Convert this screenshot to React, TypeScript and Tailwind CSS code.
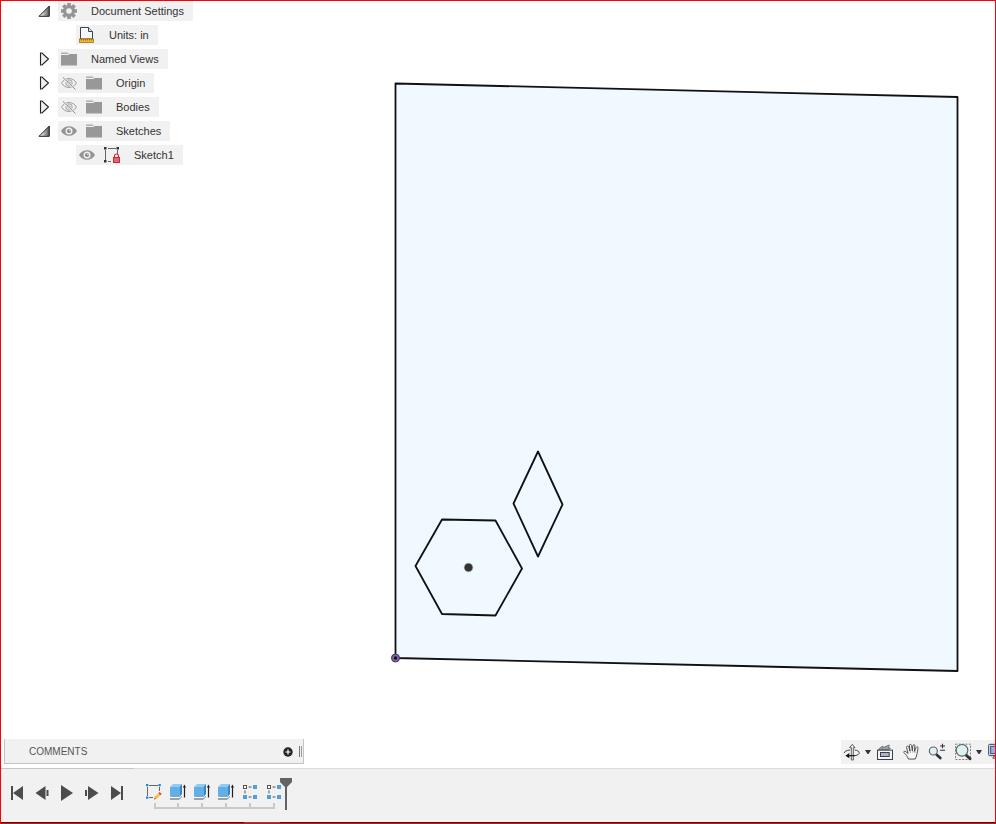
import type { ReactNode } from "react";

type IconProps = { className?: string };

const Gear = () => (
  <svg viewBox="0 0 16 16" className="size-4">
    <g fill="#959595">
      {[0, 45, 90, 135].map((a) => (
        <rect key={a} x="6.2" y="0" width="3.6" height="16" transform={`rotate(${a} 8 8)`} />
      ))}
      <circle cx="8" cy="8" r="6" />
    </g>
    <circle cx="8" cy="8" r="2.8" fill="#f1f1f1" />
  </svg>
);

const Units = () => (
  <svg viewBox="0 0 16 16" className="size-4">
    <path d="M1.500 12V.5H9.500l4 4V12z" fill="#f6f8fb" stroke="#3c4252" />
    <path d="M9.500 .5v4h4" fill="#cfd4de" stroke="#3c4252" />
    <rect x=".5" y="12" width="14" height="3.500" fill="#f3bb2c" stroke="#a6700e" strokeWidth=".8" />
    <path d="M2.500 12v1.500M4.500 12v1.500M6.500 12v1.500M8.500 12v1.500M10.500 12v1.500M12.500 12v1.500" stroke="#8a5b0a" strokeWidth=".8" />
  </svg>
);

const Folder = () => (
  <svg viewBox="0 0 16 16" className="size-4" fill="#989898">
    <path d="M0 1.500h6.500l1.500 1.500h-8z" opacity=".75" />
    <path d="M0 4h7.500l1-1H16V14.500H0z" />
  </svg>
);

const EyeOn = () => (
  <svg viewBox="0 0 16 16" className="size-4">
    <path d="M0 8C3 1.700 13 1.700 16 8 13 14.300 3 14.300 0 8z" fill="#959595" />
    <circle cx="8" cy="8" r="3.500" fill="#f1f1f1" />
    <circle cx="8" cy="8" r="2.100" fill="#8a8a8a" />
    <circle cx="8.800" cy="7.300" r=".8" fill="#f1f1f1" />
  </svg>
);

const EyeOff = () => (
  <svg viewBox="0 0 16 16" className="size-4" fill="none" stroke="#a0a0a0">
    <path d="M.5 8C4 2 12 2 15.500 8 12 14 4 14 .5 8z" />
    <circle cx="8" cy="8" r="3.200" />
    <circle cx="8" cy="8" r="1.300" />
    <path d="M2 2.500l12 12" stroke="#f1f1f1" strokeWidth="2" />
    <path d="M2 2.500l12.500 12" stroke="#8c8c8c" />
  </svg>
);

const LockedSketch = () => (
  <svg viewBox="0 0 16 16" className="size-4 overflow-visible">
    <path d="M1.500 3v10M13.500 3v4M4 1.500h8M4 14.500h3" stroke="#666" fill="none" />
    <path d="M0 0h2.500v2.500H0zM12.500 0H15v2.500h-2.500zM0 13h2.500v2.500H0z" fill="#333" />
    <path d="M10.500 10.500V9a2 2 0 0 1 4 0v1.500" fill="none" stroke="#c42a34" strokeWidth="1.200" />
    <rect x="9.500" y="10.500" width="6" height="5" fill="#e2676c" stroke="#c42a34" />
  </svg>
);

const Twisty = ({ open }: { open: boolean }) =>
  open ? (
    <svg viewBox="0 0 12 12" className="size-3">
      <defs>
        <linearGradient id="twisty" x1="0" x2="1">
          <stop offset=".2" stopColor="#eee" />
          <stop offset="1" stopColor="#555" />
        </linearGradient>
      </defs>
      <path d="M1 11.300L11.300 1v10.300z" fill="url(#twisty)" stroke="#222" />
    </svg>
  ) : (
    <svg viewBox="0 0 12 12" className="h-3 w-3 overflow-visible">
      <path d="M2.500 0H4l6.500 6L4 12H2.500z" fill="#eceef0" stroke="#222" strokeWidth="1.100" />
    </svg>
  );

type Node = { label: string; icons: ReactNode[]; open?: boolean; child?: boolean };

const nodes: Node[] = [
  { label: "Document Settings", icons: [<Gear key="g" />], open: true },
  { label: "Units: in", icons: [<Units key="u" />], child: true },
  { label: "Named Views", icons: [<Folder key="f" />], open: false },
  { label: "Origin", icons: [<EyeOff key="e" />, <Folder key="f" />], open: false },
  { label: "Bodies", icons: [<EyeOff key="e" />, <Folder key="f" />], open: false },
  { label: "Sketches", icons: [<EyeOn key="e" />, <Folder key="f" />], open: true },
  { label: "Sketch1", icons: [<EyeOn key="e" />, <LockedSketch key="s" />], child: true },
];

const Tree = () => (
  <ul className="flex flex-col gap-1 pl-[37px]">
    {nodes.map((n) => (
      <li key={n.label} className="flex h-5 items-center">
        {n.child ? (
          <span className="w-[38px]" />
        ) : (
          <button aria-label={`Toggle ${n.label}`} aria-expanded={n.open} className="w-5">
            <Twisty open={!!n.open} />
          </button>
        )}
        <button className="flex h-5 items-center bg-[#f1f1f1] pr-[9px] pl-[3px] text-[11px] leading-4 text-[#333]">
          <span className="flex gap-[9px]">{n.icons}</span>
          <span className="ml-3.5">{n.label}</span>
        </button>
      </li>
    ))}
  </ul>
);

const Comments = () => (
  <div className="mb-1 ml-[3px] flex h-[25px] items-center border-r border-b border-l border-[#c4c4c4] bg-[#f1f1f1] pt-px pr-px pl-6">
    <span className="flex-1 text-[10px] leading-4 text-[#555]">COMMENTS</span>
    <button aria-label="Add comment" className="mr-1.5">
      <svg viewBox="0 0 10 10" className="size-2.5">
        <circle cx="5" cy="5" r="4.700" fill="#222" />
        <path d="M5 2.500v5M2.500 5h5" stroke="#fff" strokeWidth="1.200" />
      </svg>
    </button>
    <span className="flex h-[11px] w-[3px] justify-between">
      <span className="w-px bg-[#777]" />
      <span className="w-px bg-[#999]" />
    </span>
  </div>
);

const Drawing = () => (
  <svg viewBox="304 1 691 739" className="min-h-0 w-full flex-1" role="img" aria-label="Sketch canvas">
    <g stroke="#111" strokeWidth="1.800" strokeLinejoin="round">
      <path d="M395.500 83.500L957.500 97v574L395.500 658z" fill="#f0f9ff" />
      <path d="M538 451.500L562.500 504.500 538 556.500 513.500 503.500z" fill="none" />
      <path d="M442 519.500L495.500 520.500 522 568.500 495.500 615.500 442 614 415.500 566z" fill="none" />
    </g>
    <circle cx="468.500" cy="567.500" r="4.300" fill="#333" stroke="#9aa" strokeWidth=".6" />
    <circle cx="395.500" cy="658" r="4" fill="#8064b0" stroke="#443355" />
    <circle cx="395.500" cy="658" r="1.700" fill="#111" />
  </svg>
);

const Orbit = () => (
  <svg viewBox="24 39 48 54" className="h-[18px] w-4" fill="none">
    <path d="M42 60c-10 1-17 4-17 9M56 60c17 2 19 14 1 17" stroke="#444" strokeWidth="3" />
    <path d="M46 90V53h-5l8-10 8 10h-5v37z" fill="#eee" stroke="#444" strokeWidth="2.500" />
    <path d="M28 77l12-8v16z" fill="#111" />
    <path d="M39 77h18" stroke="#111" strokeWidth="3.500" />
  </svg>
);

const LookAt = () => (
  <svg viewBox="123 39 48 54" className="h-[18px] w-4">
    <path d="M128 57l12-9v5l20-8-3 9h6l-3 5h-32z" fill="#9aa0a8" stroke="#555" strokeWidth="2" />
    <rect x="124.500" y="60.500" width="45" height="28" fill="#f4f5f7" stroke="#394150" strokeWidth="3" />
    <rect x="133.500" y="67.500" width="26" height="12" fill="#aeb4c0" stroke="#394150" strokeWidth="3" />
  </svg>
);

const Hand = () => (
  <svg viewBox="200 39 50 54" className="h-[18px] w-4">
    <path
      d="M217 88c-3-9-9-15-14-20-2-4 3-6 6-3l7 6-5-20c0-4 5-5 7-1l4 13-2-17c0-5 6-5 7 0l2 16 2-16c1-4 7-4 6 1l-1 17 5-12c2-4 7-2 6 2-2 11-4 27-9 34z"
      fill="#fafafa"
      stroke="#3a3f48"
      strokeWidth="2.800"
      strokeLinejoin="round"
    />
    <path d="M222 63l1 6M231 62v6M238 64l-1 5" stroke="#666" strokeWidth="2" />
  </svg>
);

const Zoom = () => (
  <svg viewBox="279 39 48 54" className="h-[18px] w-4 overflow-visible">
    <path d="M302 74l11 10" stroke="#2a313c" strokeWidth="8" strokeLinecap="round" />
    <circle cx="292" cy="63" r="12" fill="#dff0f1" stroke="#59636f" strokeWidth="3.500" />
    <path d="M312 48h15M319.500 41v14M312 61h15" stroke="#333" strokeWidth="3.200" />
  </svg>
);

const ZoomWindow = () => (
  <svg viewBox="357 39 48 54" className="h-[18px] w-4 overflow-visible">
    <rect x="358.500" y="42.500" width="45" height="46" fill="none" stroke="#666" strokeWidth="2.500" strokeDasharray="6 4" />
    <path d="M390 75l12 11" stroke="#333" strokeWidth="9" strokeLinecap="round" />
    <circle cx="378" cy="61" r="17.500" fill="#dff1ef" stroke="#59636f" strokeWidth="3.500" />
  </svg>
);

const Display = () => (
  <svg viewBox="456 39 48 54" className="h-[18px] w-4">
    <rect x="458" y="43" width="42" height="34" rx="3" fill="#e4e8ef" stroke="#3b4350" strokeWidth="3" />
    <rect x="464" y="49" width="30" height="22" fill="#8fb0e8" stroke="#35508a" strokeWidth="3" />
    <path d="M470 85h18v-7h-14z" fill="#aaa" stroke="#444" strokeWidth="2" />
  </svg>
);

const Caret = ({ label }: { label: string }) => (
  <button aria-label={label} className="flex w-[17px] shrink-0 justify-center">
    <svg viewBox="0 0 7 4" className="h-1 w-[7px]">
      <path d="M0 0h6L3.500 4h-1z" fill="#333" />
    </svg>
  </button>
);

const Tool = ({ label, children }: { label: string; children: ReactNode }) => (
  <button aria-label={label} className="w-4 shrink-0">
    {children}
  </button>
);

const NavBar = () => (
  <div className="mb-1 flex h-6 w-[154px] items-center self-end overflow-hidden bg-[#f1f1f1] pl-[3px]">
    <Tool label="Orbit"><Orbit /></Tool>
    <Caret label="Orbit options" />
    <div className="flex shrink-0 gap-2.5">
      <Tool label="Look at"><LookAt /></Tool>
      <Tool label="Pan"><Hand /></Tool>
      <Tool label="Zoom"><Zoom /></Tool>
      <Tool label="Zoom window"><ZoomWindow /></Tool>
    </div>
    <Caret label="Zoom options" />
    <Tool label="Display settings"><Display /></Tool>
  </div>
);

const transport = [
  { label: "Go to start", d: "M6 5h2v14H6zM18 5v14L8 12z" },
  { label: "Step back", d: "M5.500 12l10-7v14zM16.500 9h2v6h-2z" },
  { label: "Play", d: "M6 4L18 12l-12 8z" },
  { label: "Step forward", d: "M5 9h2v6H5zM8 5l10.500 7L8 19z" },
  { label: "Go to end", d: "M6 5l10 7L6 19zM16 5h2v14h-2z" },
];

const SketchFeature = ({ className }: IconProps) => (
  <svg viewBox="0 0 16 16" className={className}>
    <path d="M3 1.500h9M1.500 3v9M13.500 3v4M3 13.500h4" stroke="#666" fill="none" />
    <path d="M0 0h2.300v2.300H0zM12.500 0h2.300v2.300h-2.300zM0 12.500h2.300v2.300H0z" fill="#1787e0" />
    <path d="M8 15.500l1-3.200 3.500-3 2 2-3.500 3.200z" fill="#f7bd45" />
    <path d="M8 15.500l.6-2 1.500 1.300z" fill="#776" />
    <path d="M12.300 9.200l1.200-1.200 2.200 1.700-1.300 1.500z" fill="#e9404d" />
  </svg>
);

const Extrude = ({ className }: IconProps) => (
  <svg viewBox="0 0 16 16" className={className}>
    <path d="M0 14h9l3-2.500v1.500l-3 3H0z" fill="#a0a0a0" />
    <path d="M0 13h9l3-3v1.500l-3 2.500H0z" fill="#fff" />
    <path d="M0 3L3 0h9L9.500 3z" fill="#8fccf5" />
    <path d="M0 3h9.500v10H1L0 12z" fill="#62aee6" />
    <path d="M9.500 3L12 0v10l-2.500 3z" fill="#3486c4" />
    <path d="M14.500 3v10.500" stroke="#222" strokeWidth="1.200" />
    <path d="M12.800 3.500l1.700-3 1.500 3z" fill="#222" />
  </svg>
);

const Pattern = ({ className }: IconProps) => (
  <svg viewBox="0 0 16 16" className={className}>
    <rect x="1.500" y="1.500" width="3" height="3" fill="#fff" stroke="#555" />
    <path d="M6.500 3h3M6.500 13h3M3 6.500v3" stroke="#555" />
    <path d="M11 1h4v4h-4zM1 11h4v4H1zM11 11h4v4h-4z" fill="#539fd8" />
  </svg>
);

const features = [
  { label: "Sketch feature", Icon: SketchFeature },
  { label: "Extrude 1", Icon: Extrude },
  { label: "Extrude 2", Icon: Extrude },
  { label: "Extrude 3", Icon: Extrude },
  { label: "Pattern 1", Icon: Pattern },
  { label: "Pattern 2", Icon: Pattern },
];

const Timeline = () => (
  <footer className="flex h-[55px] shrink-0 flex-col bg-[#f1f1f1]">
    <div className="h-px bg-[#dcdcdc]">
      <div className="h-px w-[133px] bg-[#c6c6c6]" />
    </div>
    <div className="flex flex-1 items-start pl-[3px]">
      <div className="mt-3 mr-[13px] flex">
        {transport.map((t) => (
          <button key={t.label} aria-label={t.label} className="flex h-6 w-[25px] justify-center">
            <svg viewBox="0 0 24 24" className="size-6" fill="#4c4c4e">
              <path d={t.d} />
            </svg>
          </button>
        ))}
      </div>
      <div className="mt-3">
        <div className="flex h-[22px]">
          {features.map(({ label, Icon }) => (
            <button key={label} aria-label={label} className="flex w-6 items-center justify-center">
              <Icon className="size-4" />
            </button>
          ))}
        </div>
        <svg viewBox="0 0 144 7" className="h-[7px] w-36">
          <path d="M13 0v5M36 0v5M60 0v5M84 0v5M108 0v5M132 0v5M12 5h121" stroke="#c9c9c9" strokeWidth="2" fill="none" />
        </svg>
      </div>
      <button aria-label="Timeline marker" className="mt-[9px] -ml-1.5">
        <svg viewBox="0 0 12 32" className="h-8 w-3" fill="#636363">
          <path d="M0 0h12v4L7 9v23H5V9L0 4z" />
        </svg>
      </button>
    </div>
    <div className="h-px bg-[#222] pl-[243px]">
      <div className="h-px w-9 bg-[#555]" />
    </div>
  </footer>
);

export default function App() {
  return (
    <div className="flex h-screen flex-col border border-[#f00] bg-white font-['Liberation_Sans',Arial,sans-serif]">
      <main className="flex min-h-0 flex-1">
        <aside className="flex w-[303px] shrink-0 flex-col justify-between">
          <Tree />
          <Comments />
        </aside>
        <section className="flex min-w-0 flex-1 flex-col">
          <Drawing />
          <NavBar />
        </section>
      </main>
      <Timeline />
    </div>
  );
}
